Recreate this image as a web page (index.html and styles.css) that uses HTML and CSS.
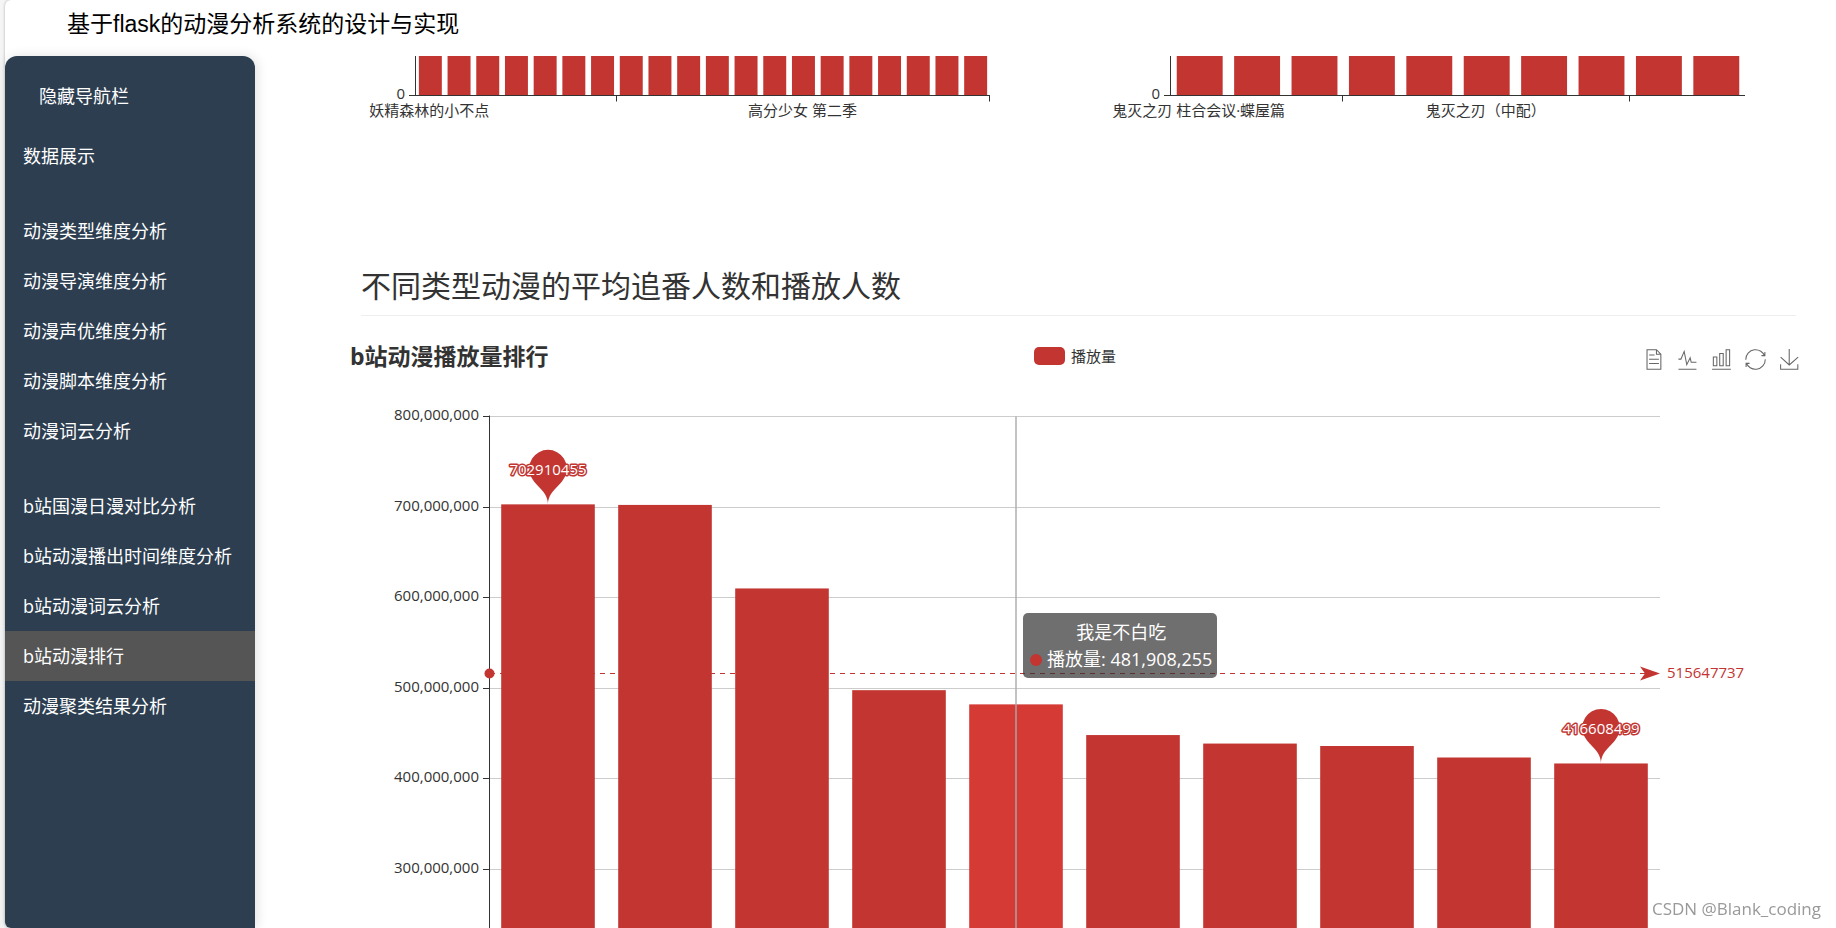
FILE: index.html
```html
<!DOCTYPE html>
<html lang="zh-CN">
  <head>
    <meta charset="utf-8" />
    <title>基于flask的动漫分析系统的设计与实现</title>
    <link rel="stylesheet" href="styles.css" />
  </head>

  <body>
    <div class="page">
      <header class="topbar">
        <h1>基于flask的动漫分析系统的设计与实现</h1>
      </header>

      <div class="layout">
        <nav class="sidebar">
          <button type="button" class="toggle">隐藏导航栏</button>
          <ul>
            <li><a href="#">数据展示</a></li>
          </ul>
          <ul>
            <li><a href="#">动漫类型维度分析</a></li>
            <li><a href="#">动漫导演维度分析</a></li>
            <li><a href="#">动漫声优维度分析</a></li>
            <li><a href="#">动漫脚本维度分析</a></li>
            <li><a href="#">动漫词云分析</a></li>
          </ul>
          <ul>
            <li><a href="#">b站国漫日漫对比分析</a></li>
            <li><a href="#">b站动漫播出时间维度分析</a></li>
            <li><a href="#">b站动漫词云分析</a></li>
            <li><a href="#" class="active">b站动漫排行</a></li>
            <li><a href="#">动漫聚类结果分析</a></li>
          </ul>
        </nav>

        <main class="content">
          <div class="chart-row">
            <svg id="score-chart" class="small-chart"></svg>
            <svg id="follow-chart" class="small-chart"></svg>
          </div>

          <h2>不同类型动漫的平均追番人数和播放人数</h2>

          <section class="chart">
            <div class="chart-head">
              <h3>b站动漫播放量排行</h3>
              <div class="legend"><span class="swatch"></span>播放量</div>
              <div class="toolbox">
                <button type="button" aria-label="数据视图">
                  <svg viewBox="0 0 60 60"><path d="M17.5,17.3H33M45.4,29.5h-28M11.5,2v56H51V14.8L38.4,2H11.5zM38.4,2.2v12.7H51M45.4,41.7h-28" /></svg>
                </button>
                <button type="button" aria-label="切换为折线图">
                  <svg viewBox="0 0 60 60"><path d="M4.1,28.9h7.1l9.3-22l7.4,38l9.7-19.7l3,12.8h14.9M4.1,58h51.4" /></svg>
                </button>
                <button type="button" aria-label="切换为柱状图">
                  <svg viewBox="0 0 60 60"><path d="M6.7,22.9h10V48h-10V22.9zM24.9,13h10v35h-10V13zM43.2,2h10v46h-10V2zM3.1,58h53.7" /></svg>
                </button>
                <button type="button" aria-label="还原">
                  <svg viewBox="0 0 60 60"><path d="M47,18.9h9.8V8.7M56.3,20.1C52.1,9,40.5,0.6,26.8,2.1C12.6,3.7,1.6,16.2,2.1,30.6M13,41.1H3.1v10.2M3.7,39.9c4.2,11.1,15.8,19.5,29.5,18c14.2-1.6,25.2-14.1,24.7-28.5" /></svg>
                </button>
                <button type="button" aria-label="保存为图片">
                  <svg viewBox="0 0 60 60"><path d="M4.7,22.9L29.3,45.5L54.7,23.4M4.6,43.6L4.6,58L53.8,58L53.8,43.6M29.2,45.1L29.2,0" /></svg>
                </button>
              </div>
            </div>
            <svg id="play-chart" class="big-chart"></svg>
            <div class="tooltip" id="tooltip">
              <div class="tooltip-name">我是不白吃</div>
              <div class="tooltip-row"><span class="dot"></span>播放量: 481,908,255</div>
            </div>
          </section>
        </main>
      </div>
    </div>

    <div class="watermark">CSDN @Blank_coding</div>

    <script src="charts.js"></script>
  </body>
</html>
```
FILE: styles.css
```css
* {
  box-sizing: border-box;
}

body {
  margin: 0;
  height: 100vh;
  overflow: hidden;
  background-color: #f5f5f5;
  color: #333;
  font-family: "Open Sans", "Noto Sans CJK SC", sans-serif;
}

.page {
  display: flex;
  flex-direction: column;
  height: 100vh;
  margin-left: 5px;
  background-color: #fff;
  border-radius: 6px 0 0 6px;
  box-shadow: 0 0 3px rgba(0, 0, 0, 0.3);
}

.topbar {
  flex: none;
  height: 56px;
  padding-left: 62px;
}

h1 {
  margin: 0;
  color: #000;
  font-family: "Liberation Sans", "Noto Sans CJK SC", sans-serif;
  font-size: 23px;
  font-weight: normal;
  line-height: 48px;
}

.layout {
  display: flex;
  flex: 1;
  min-height: 0;
}

.sidebar {
  flex: none;
  width: 250px;
  padding-top: 15px;
  background-color: #2c3e50;
  border-radius: 12px 12px 0 6px;
  box-shadow: 2px 0 12px rgba(0, 0, 0, 0.12);
}

.toggle {
  display: block;
  height: 48px;
  margin-bottom: 12px;
  padding: 0 34px;
  background: none;
  border: none;
  color: #fff;
  font-family: inherit;
  font-size: 18px;
  cursor: pointer;
}

.sidebar ul {
  margin: 0 0 25px;
  padding: 0;
  list-style: none;
}

.sidebar a {
  display: block;
  padding-left: 18px;
  color: #fff;
  font-size: 18px;
  line-height: 50px;
  text-decoration: none;
}

.sidebar a.active {
  background-color: #555;
}

.content {
  flex: 1;
  min-width: 0;
  overflow: hidden;
}

.chart-row {
  display: flex;
  gap: 37px;
  padding: 0 20px 0 89px;
}

.small-chart {
  flex: 1;
  min-width: 0;
  height: 75px;
}

h2 {
  margin: 125px 40px 25px 106px;
  border-bottom: 1px solid #eee;
  font-size: 30px;
  font-weight: normal;
  line-height: 59px;
}

.chart {
  position: relative;
  margin: 0 30px 0 89px;
}

.chart-head {
  display: grid;
  grid-template-columns: 1fr auto 1fr;
  align-items: start;
  height: 36px;
  padding: 0 6px;
}

h3 {
  margin: 0;
  font-size: 23px;
  line-height: 30px;
}

.legend {
  display: flex;
  align-items: center;
  gap: 6px;
  font-size: 15px;
  line-height: 30px;
}

.swatch {
  width: 31px;
  height: 18px;
  background-color: #c23531;
  border-radius: 5px;
}

.toolbox {
  display: flex;
  justify-content: flex-end;
  gap: 13px;
  padding-top: 8px;
}

.toolbox button {
  width: 21px;
  height: 21px;
  padding: 0;
  background: none;
  border: none;
  cursor: pointer;
}

.toolbox svg {
  display: block;
  overflow: visible;
}

.toolbox path {
  fill: none;
  stroke: #666;
  stroke-width: 3;
}

.big-chart {
  display: block;
  width: 100%;
  height: 839px;
}

/* chart parts */
svg text {
  fill: #333;
  font-size: 15px;
}

.axis {
  stroke: #333;
  stroke-width: 1;
}

.grid-line {
  stroke: #ccc;
}

.bar {
  fill: #c23531;
}

.bar.hover {
  fill: #d53a35;
}

.pointer {
  stroke: #aaa;
  stroke-width: 2;
  opacity: 0.7;
}

.mark-line {
  stroke: #c23531;
  stroke-dasharray: 5 5;
}

.mark {
  fill: #c23531;
}

svg .mark-text {
  fill: #c23531;
}

svg .pin-text {
  fill: #fff;
  stroke: #c23531;
  stroke-width: 3;
  stroke-linejoin: round;
  paint-order: stroke;
}

.tooltip {
  position: absolute;
  top: 272px;
  padding: 6px 5px 5px 7px;
  background-color: rgba(50, 50, 50, 0.7);
  border-radius: 5px;
  color: #fff;
  font-size: 18px;
  line-height: 27px;
  white-space: nowrap;
}

.tooltip-name {
  text-align: center;
}

.tooltip-row {
  display: flex;
  align-items: center;
  gap: 5px;
}

.dot {
  width: 12px;
  height: 12px;
  background-color: #c23531;
  border-radius: 50%;
}

.watermark {
  position: fixed;
  right: 15px;
  bottom: 7px;
  color: #999;
  font-size: 17px;
  line-height: 24px;
  text-shadow: 1px 1px 0 #fff;
}
```
FILE: charts.js
```js
var SVG = "http://www.w3.org/2000/svg";

function add(svg, tag, attrs, text) {
  var el = document.createElementNS(SVG, tag);
  for (var key in attrs) {
    el.setAttribute(key, attrs[key]);
  }
  if (text !== undefined) {
    el.textContent = text;
  }
  svg.appendChild(el);
  return el;
}

function line(svg, cls, x1, y1, x2, y2) {
  add(svg, "line", { class: cls, x1: x1, y1: y1, x2: x2, y2: y2 });
}

// bottom part of a bar chart: zero line, ticks and category names
function drawSmall(id, count, ticks, labels) {
  var svg = document.getElementById(id);
  svg.innerHTML = "";
  var width = svg.clientWidth;
  var left = Math.round(width * 0.1);
  var right = Math.round(width * 0.9);
  var step = (right - left) / count;
  var base = 39.5;

  for (var i = 0; i < count; i++) {
    add(svg, "rect", {
      class: "bar",
      x: left + step * (i + 0.1),
      y: 0,
      width: step * 0.8,
      height: base,
    });
  }
  line(svg, "axis", left - 0.5, 0, left - 0.5, base);
  line(svg, "axis", left - 7, base, right, base);
  ticks.forEach(function (tick) {
    var x = Math.round(left + step * tick) - 0.5;
    line(svg, "axis", x, base, x, base + 6);
  });
  add(svg, "text", { x: left - 11, y: base + 3, "text-anchor": "end" }, "0");
  labels.forEach(function (label) {
    add(
      svg,
      "text",
      { x: left + step * (label[0] + 0.5) - 1, y: 60, "text-anchor": "middle" },
      label[1]
    );
  });
}

var plays = [
  702910455, 702300000, 610000000, 497600000, 481908255, 448000000, 438600000,
  435900000, 423200000, 416608499,
];
var average = 515647737;
var hovered = 4;

function drawPlays() {
  var svg = document.getElementById("play-chart");
  svg.innerHTML = "";
  var width = svg.clientWidth;
  var left = Math.round(width * 0.1);
  var right = Math.round(width * 0.9);
  var step = (right - left) / plays.length;
  var top = 39.5;
  var height = 724;
  // height of the svg that is still inside the window
  var visible = window.innerHeight - svg.getBoundingClientRect().top;

  function y(value) {
    return top + height * (1 - value / 800000000);
  }
  function center(i) {
    return left + step * (i + 0.5) - 0.5;
  }

  for (var v = 800000000; v >= 0; v -= 100000000) {
    var gy = Math.floor(y(v)) + 0.5;
    if (gy + 10 > visible) {
      break;
    }
    line(svg, "grid-line", left, gy, right, gy);
    line(svg, "axis", left - 7, gy, left, gy);
    add(
      svg,
      "text",
      { x: left - 11, y: gy + 3, "text-anchor": "end" },
      v.toLocaleString("en-US")
    );
  }
  line(svg, "axis", left - 0.5, top - 1, left - 0.5, top + height);

  plays.forEach(function (value, i) {
    add(svg, "rect", {
      class: i === hovered ? "bar hover" : "bar",
      x: center(i) - step * 0.4,
      y: y(value),
      width: step * 0.8,
      height: y(0) - y(value),
    });
  });

  // average line
  var avg = Math.floor(y(average)) + 0.5;
  line(svg, "mark-line", left, avg, right - 15, avg);
  add(svg, "circle", { class: "mark", cx: left - 0.5, cy: avg, r: 5 });
  add(svg, "path", {
    class: "mark",
    d: "M0 0L-20 -7L-15 0L-20 7Z",
    transform: "translate(" + right + " " + avg + ")",
  });
  add(svg, "text", { class: "mark-text", x: right + 7, y: avg + 4 }, average);

  line(svg, "pointer", center(hovered), top, center(hovered), top + height);

  // max and min
  [0, plays.length - 1].forEach(function (i) {
    var py = y(plays[i]);
    add(svg, "path", {
      class: "mark",
      d: "M-16.9 -27.7A18.75 18.75 0 1 1 16.9 -27.7C12.1 -17.5 0 -13.1 0 0C0 -13.1 -12.1 -17.5 -16.9 -27.7Z",
      transform: "translate(" + center(i) + " " + py + ")",
    });
    add(
      svg,
      "text",
      { class: "pin-text", x: center(i), y: py - 29, "text-anchor": "middle" },
      plays[i]
    );
  });

  document.getElementById("tooltip").style.left =
    Math.round(center(hovered)) + 7 + "px";
}

function drawAll() {
  drawSmall("score-chart", 20, [7, 20], [
    [0, "妖精森林的小不点"],
    [13, "高分少女 第二季"],
  ]);
  drawSmall("follow-chart", 10, [3, 8], [
    [0, "鬼灭之刃 柱合会议·蝶屋篇"],
    [5, "鬼灭之刃（中配）"],
  ]);
  drawPlays();
}

window.addEventListener("resize", drawAll);
drawAll();
```
